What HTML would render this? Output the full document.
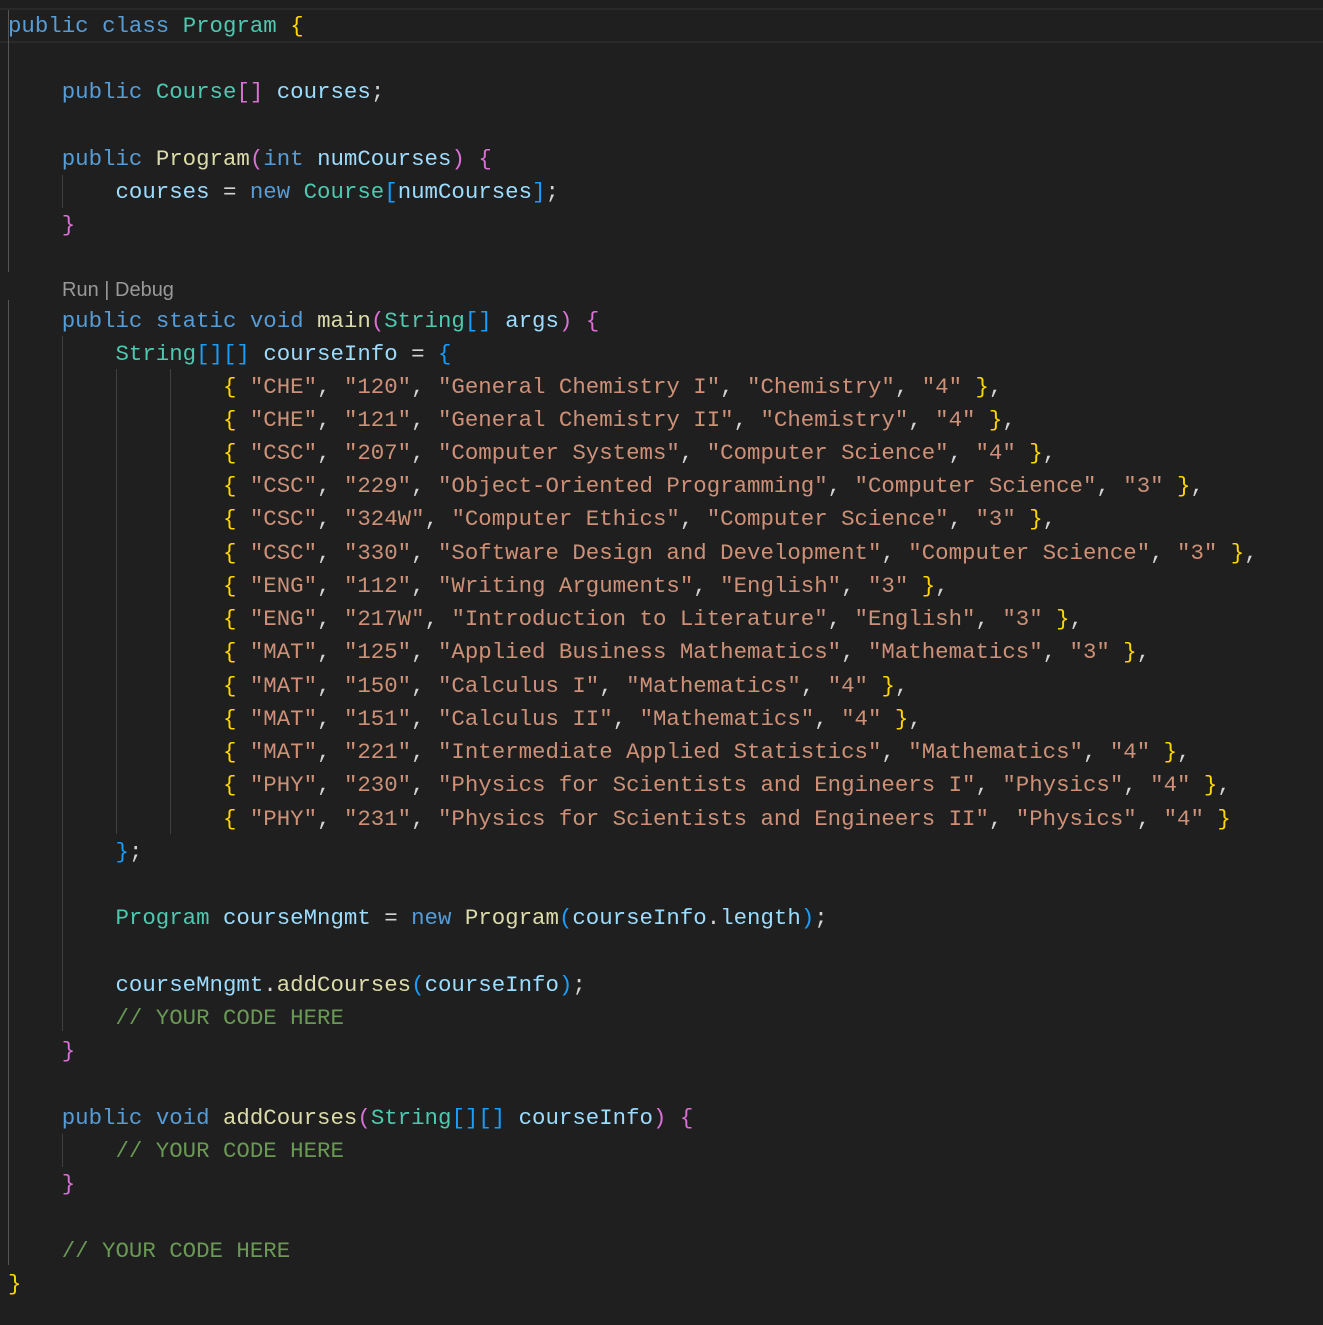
<!DOCTYPE html><html><head><style>
body{margin:0;width:1323px;height:1325px;background:#1f1f1f;overflow:hidden;position:relative;font-family:"Liberation Mono",monospace;font-size:22.4px;color:#d4d4d4}
.l{position:absolute;left:8px;height:33px;line-height:33px;white-space:pre;margin-top:2px}
.k{color:#569cd6}.t{color:#4ec9b0}.v{color:#9cdcfe}.s{color:#ce9178}.f{color:#dcdcaa}.c{color:#6a9955}.p{color:#c586c0}
.g{color:#ffd700}.o{color:#da70d6}.b{color:#179fff}
.ig{position:absolute;width:1px;background:#404040}
</style></head><body>
<div style="position:absolute;left:0;top:8px;width:1323px;height:31px;border-top:2px solid #2a2a2a;border-bottom:2px solid #2a2a2a"></div>
<div class="ig" style="left:8px;top:10px;height:262px;background:#555"></div>
<div class="ig" style="left:8px;top:300px;height:965px;background:#555"></div>
<div class="ig" style="left:62px;top:175px;height:33px"></div>
<div class="ig" style="left:62px;top:336px;height:695px"></div>
<div class="ig" style="left:116px;top:369px;height:465px"></div>
<div class="ig" style="left:170px;top:369px;height:465px"></div>
<div class="ig" style="left:62px;top:1134px;height:33px"></div>
<div class="l" style="top:8px"><span class="k">public</span> <span class="k">class</span> <span class="t">Program</span> <span class="g">{</span></div>
<div class="l" style="top:74px">    <span class="k">public</span> <span class="t">Course</span><span class="o">[]</span> <span class="v">courses</span>;</div>
<div class="l" style="top:141px">    <span class="k">public</span> <span class="f">Program</span><span class="o">(</span><span class="k">int</span> <span class="v">numCourses</span><span class="o">)</span> <span class="o">{</span></div>
<div class="l" style="top:174px">        <span class="v">courses</span> = <span class="k">new</span> <span class="t">Course</span><span class="b">[</span><span class="v">numCourses</span><span class="b">]</span>;</div>
<div class="l" style="top:207px">    <span class="o">}</span></div>
<div style="position:absolute;left:62px;top:279px;font-family:'Liberation Sans',sans-serif;font-size:20px;color:#999">Run | Debug</div>
<div class="l" style="top:303px">    <span class="k">public</span> <span class="k">static</span> <span class="k">void</span> <span class="f">main</span><span class="o">(</span><span class="t">String</span><span class="b">[]</span> <span class="v">args</span><span class="o">)</span> <span class="o">{</span></div>
<div class="l" style="top:336px">        <span class="t">String</span><span class="b">[][]</span> <span class="v">courseInfo</span> = <span class="b">{</span></div>
<div class="l" style="top:369px">                <span class="g">{</span> <span class="s">"CHE"</span>, <span class="s">"120"</span>, <span class="s">"General Chemistry I"</span>, <span class="s">"Chemistry"</span>, <span class="s">"4"</span> <span class="g">}</span>,</div>
<div class="l" style="top:402px">                <span class="g">{</span> <span class="s">"CHE"</span>, <span class="s">"121"</span>, <span class="s">"General Chemistry II"</span>, <span class="s">"Chemistry"</span>, <span class="s">"4"</span> <span class="g">}</span>,</div>
<div class="l" style="top:435px">                <span class="g">{</span> <span class="s">"CSC"</span>, <span class="s">"207"</span>, <span class="s">"Computer Systems"</span>, <span class="s">"Computer Science"</span>, <span class="s">"4"</span> <span class="g">}</span>,</div>
<div class="l" style="top:468px">                <span class="g">{</span> <span class="s">"CSC"</span>, <span class="s">"229"</span>, <span class="s">"Object-Oriented Programming"</span>, <span class="s">"Computer Science"</span>, <span class="s">"3"</span> <span class="g">}</span>,</div>
<div class="l" style="top:501px">                <span class="g">{</span> <span class="s">"CSC"</span>, <span class="s">"324W"</span>, <span class="s">"Computer Ethics"</span>, <span class="s">"Computer Science"</span>, <span class="s">"3"</span> <span class="g">}</span>,</div>
<div class="l" style="top:535px">                <span class="g">{</span> <span class="s">"CSC"</span>, <span class="s">"330"</span>, <span class="s">"Software Design and Development"</span>, <span class="s">"Computer Science"</span>, <span class="s">"3"</span> <span class="g">}</span>,</div>
<div class="l" style="top:568px">                <span class="g">{</span> <span class="s">"ENG"</span>, <span class="s">"112"</span>, <span class="s">"Writing Arguments"</span>, <span class="s">"English"</span>, <span class="s">"3"</span> <span class="g">}</span>,</div>
<div class="l" style="top:601px">                <span class="g">{</span> <span class="s">"ENG"</span>, <span class="s">"217W"</span>, <span class="s">"Introduction to Literature"</span>, <span class="s">"English"</span>, <span class="s">"3"</span> <span class="g">}</span>,</div>
<div class="l" style="top:634px">                <span class="g">{</span> <span class="s">"MAT"</span>, <span class="s">"125"</span>, <span class="s">"Applied Business Mathematics"</span>, <span class="s">"Mathematics"</span>, <span class="s">"3"</span> <span class="g">}</span>,</div>
<div class="l" style="top:668px">                <span class="g">{</span> <span class="s">"MAT"</span>, <span class="s">"150"</span>, <span class="s">"Calculus I"</span>, <span class="s">"Mathematics"</span>, <span class="s">"4"</span> <span class="g">}</span>,</div>
<div class="l" style="top:701px">                <span class="g">{</span> <span class="s">"MAT"</span>, <span class="s">"151"</span>, <span class="s">"Calculus II"</span>, <span class="s">"Mathematics"</span>, <span class="s">"4"</span> <span class="g">}</span>,</div>
<div class="l" style="top:734px">                <span class="g">{</span> <span class="s">"MAT"</span>, <span class="s">"221"</span>, <span class="s">"Intermediate Applied Statistics"</span>, <span class="s">"Mathematics"</span>, <span class="s">"4"</span> <span class="g">}</span>,</div>
<div class="l" style="top:767px">                <span class="g">{</span> <span class="s">"PHY"</span>, <span class="s">"230"</span>, <span class="s">"Physics for Scientists and Engineers I"</span>, <span class="s">"Physics"</span>, <span class="s">"4"</span> <span class="g">}</span>,</div>
<div class="l" style="top:801px">                <span class="g">{</span> <span class="s">"PHY"</span>, <span class="s">"231"</span>, <span class="s">"Physics for Scientists and Engineers II"</span>, <span class="s">"Physics"</span>, <span class="s">"4"</span> <span class="g">}</span></div>
<div class="l" style="top:834px">        <span class="b">}</span>;</div>
<div class="l" style="top:900px">        <span class="t">Program</span> <span class="v">courseMngmt</span> = <span class="k">new</span> <span class="f">Program</span><span class="b">(</span><span class="v">courseInfo</span>.<span class="v">length</span><span class="b">)</span>;</div>
<div class="l" style="top:967px">        <span class="v">courseMngmt</span>.<span class="f">addCourses</span><span class="b">(</span><span class="v">courseInfo</span><span class="b">)</span>;</div>
<div class="l" style="top:1000px">        <span class="c">// YOUR CODE HERE</span></div>
<div class="l" style="top:1033px">    <span class="o">}</span></div>
<div class="l" style="top:1100px">    <span class="k">public</span> <span class="k">void</span> <span class="f">addCourses</span><span class="o">(</span><span class="t">String</span><span class="b">[][]</span> <span class="v">courseInfo</span><span class="o">)</span> <span class="o">{</span></div>
<div class="l" style="top:1133px">        <span class="c">// YOUR CODE HERE</span></div>
<div class="l" style="top:1166px">    <span class="o">}</span></div>
<div class="l" style="top:1233px">    <span class="c">// YOUR CODE HERE</span></div>
<div class="l" style="top:1266px"><span class="g">}</span></div>
</body></html>
